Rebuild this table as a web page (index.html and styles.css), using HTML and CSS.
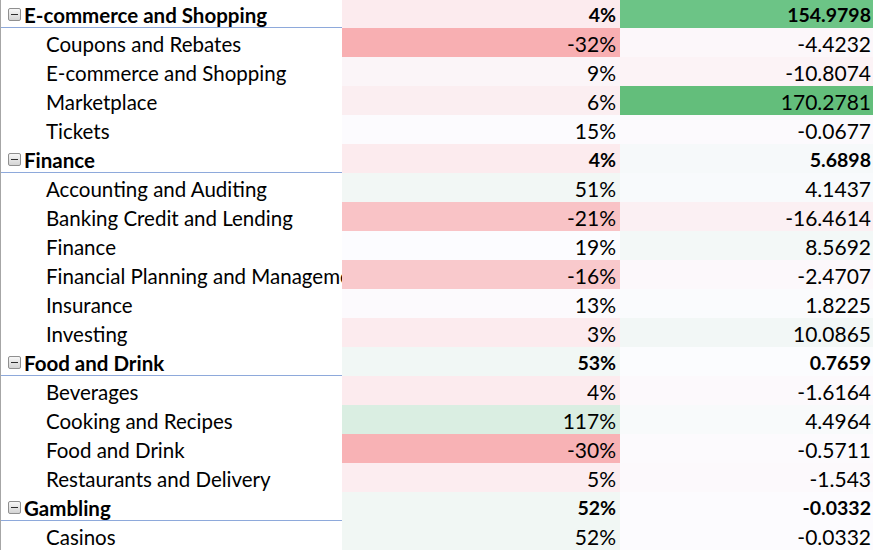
FILE: index.html
```html
<!DOCTYPE html>
<html>
<head>
<meta charset="utf-8">
<link rel="stylesheet" href="styles.css">
</head>
<body>
<div class="pivot">
  <div class="row group">
    <div class="label"><span class="toggle"></span>E-commerce and Shopping</div>
    <div class="pct" style="background:#FCEBEE">4%</div>
    <div class="val" style="background:#6CC486">154.9798</div>
  </div>
  <div class="row">
    <div class="label child">Coupons and Rebates</div>
    <div class="pct" style="background:#F8AFB2">-32%</div>
    <div class="val" style="background:#FCF7FA">-4.4232</div>
  </div>
  <div class="row">
    <div class="label child">E-commerce and Shopping</div>
    <div class="pct" style="background:#FBF5F8">9%</div>
    <div class="val" style="background:#FCF3F6">-10.8074</div>
  </div>
  <div class="row">
    <div class="label child">Marketplace</div>
    <div class="pct" style="background:#FBEEF1">6%</div>
    <div class="val" style="background:#63BE7B">170.2781</div>
  </div>
  <div class="row">
    <div class="label child">Tickets</div>
    <div class="pct" style="background:#FCFBFE">15%</div>
    <div class="val" style="background:#FCFAFD">-0.0677</div>
  </div>
  <div class="row group">
    <div class="label"><span class="toggle"></span>Finance</div>
    <div class="pct" style="background:#FCEBEE">4%</div>
    <div class="val" style="background:#F6F9FA">5.6898</div>
  </div>
  <div class="row">
    <div class="label child">Accounting and Auditing</div>
    <div class="pct" style="background:#F2F7F5">51%</div>
    <div class="val" style="background:#F8FAFC">4.1437</div>
  </div>
  <div class="row">
    <div class="label child">Banking Credit and Lending</div>
    <div class="pct" style="background:#F9C3C6">-21%</div>
    <div class="val" style="background:#FBF0F3">-16.4614</div>
  </div>
  <div class="row">
    <div class="label child">Finance</div>
    <div class="pct" style="background:#FCFCFF">19%</div>
    <div class="val" style="background:#F3F8F7">8.5692</div>
  </div>
  <div class="row">
    <div class="label child">Financial Planning and Management</div>
    <div class="pct" style="background:#F9C9CC">-16%</div>
    <div class="val" style="background:#FCF8FB">-2.4707</div>
  </div>
  <div class="row">
    <div class="label child">Insurance</div>
    <div class="pct" style="background:#FCFAFD">13%</div>
    <div class="val" style="background:#FAFBFD">1.8225</div>
  </div>
  <div class="row">
    <div class="label child">Investing</div>
    <div class="pct" style="background:#FCEBEE">3%</div>
    <div class="val" style="background:#F2F7F6">10.0865</div>
  </div>
  <div class="row group">
    <div class="label"><span class="toggle"></span>Food and Drink</div>
    <div class="pct" style="background:#F1F7F5">53%</div>
    <div class="val" style="background:#FBFCFE">0.7659</div>
  </div>
  <div class="row">
    <div class="label child">Beverages</div>
    <div class="pct" style="background:#FCEBEE">4%</div>
    <div class="val" style="background:#FCF9FC">-1.6164</div>
  </div>
  <div class="row">
    <div class="label child">Cooking and Recipes</div>
    <div class="pct" style="background:#DAEEE2">117%</div>
    <div class="val" style="background:#F8FAFB">4.4964</div>
  </div>
  <div class="row">
    <div class="label child">Food and Drink</div>
    <div class="pct" style="background:#F8B2B5">-30%</div>
    <div class="val" style="background:#FCFAFD">-0.5711</div>
  </div>
  <div class="row">
    <div class="label child">Restaurants and Delivery</div>
    <div class="pct" style="background:#FCEDF0">5%</div>
    <div class="val" style="background:#FCF9FC">-1.543</div>
  </div>
  <div class="row group">
    <div class="label"><span class="toggle"></span>Gambling</div>
    <div class="pct" style="background:#F1F7F4">52%</div>
    <div class="val" style="background:#FCFBFE">-0.0332</div>
  </div>
  <div class="row">
    <div class="label child">Casinos</div>
    <div class="pct" style="background:#F1F7F4">52%</div>
    <div class="val" style="background:#FCFBFE">-0.0332</div>
  </div>
</div>
</body>
</html>
```

FILE: styles.css
```css
html, body {
  margin: 0;
  padding: 0;
  background: #ffffff;
  overflow: hidden;
}

.pivot {
  margin-top: -1px;
  width: 873px;
  font-family: Lato, "Open Sans", sans-serif;
  color: #000;
  border-left: 1px solid #a6a6a6;
  box-sizing: border-box;
}

.row {
  display: grid;
  grid-template-columns: 341px 278px 253px;
  height: 29px;
  box-sizing: border-box;
}

.row.group {
  font-weight: 700;
  border-bottom: 1px solid #8ea9db;
}

.label {
  white-space: nowrap;
  overflow: hidden;
  font-size: 20.5px;
  line-height: 29px;
  padding-top: 2px;
  box-sizing: border-box;
  display: flex;
  align-items: center;
}

.row.group .label {
  padding-left: 7px;
  padding-top: 1px;
  line-height: 28px;
}

.label.child {
  padding-left: 45px;
}

.toggle {
  width: 11px;
  height: 11px;
  border: 1px solid #8f8f8f;
  border-radius: 2px;
  background: linear-gradient(#f7f7f7, #d4d4d4);
  margin-right: 3px;
  position: relative;
  flex: none;
}

.toggle::after {
  content: "";
  position: absolute;
  left: 2px;
  right: 2px;
  top: 5px;
  height: 1px;
  background: #2e2e2e;
}

.pct, .val {
  text-align: right;
  font-size: 21px;
  line-height: 29px;
  padding-top: 1px;
  box-sizing: border-box;
  white-space: nowrap;
}

.row.group .pct, .row.group .val {
  font-size: 19.5px;
  line-height: 28px;
  padding-top: 2px;
}

.pct {
  padding-right: 4px;
}

.val {
  padding-right: 2px;
}
```
